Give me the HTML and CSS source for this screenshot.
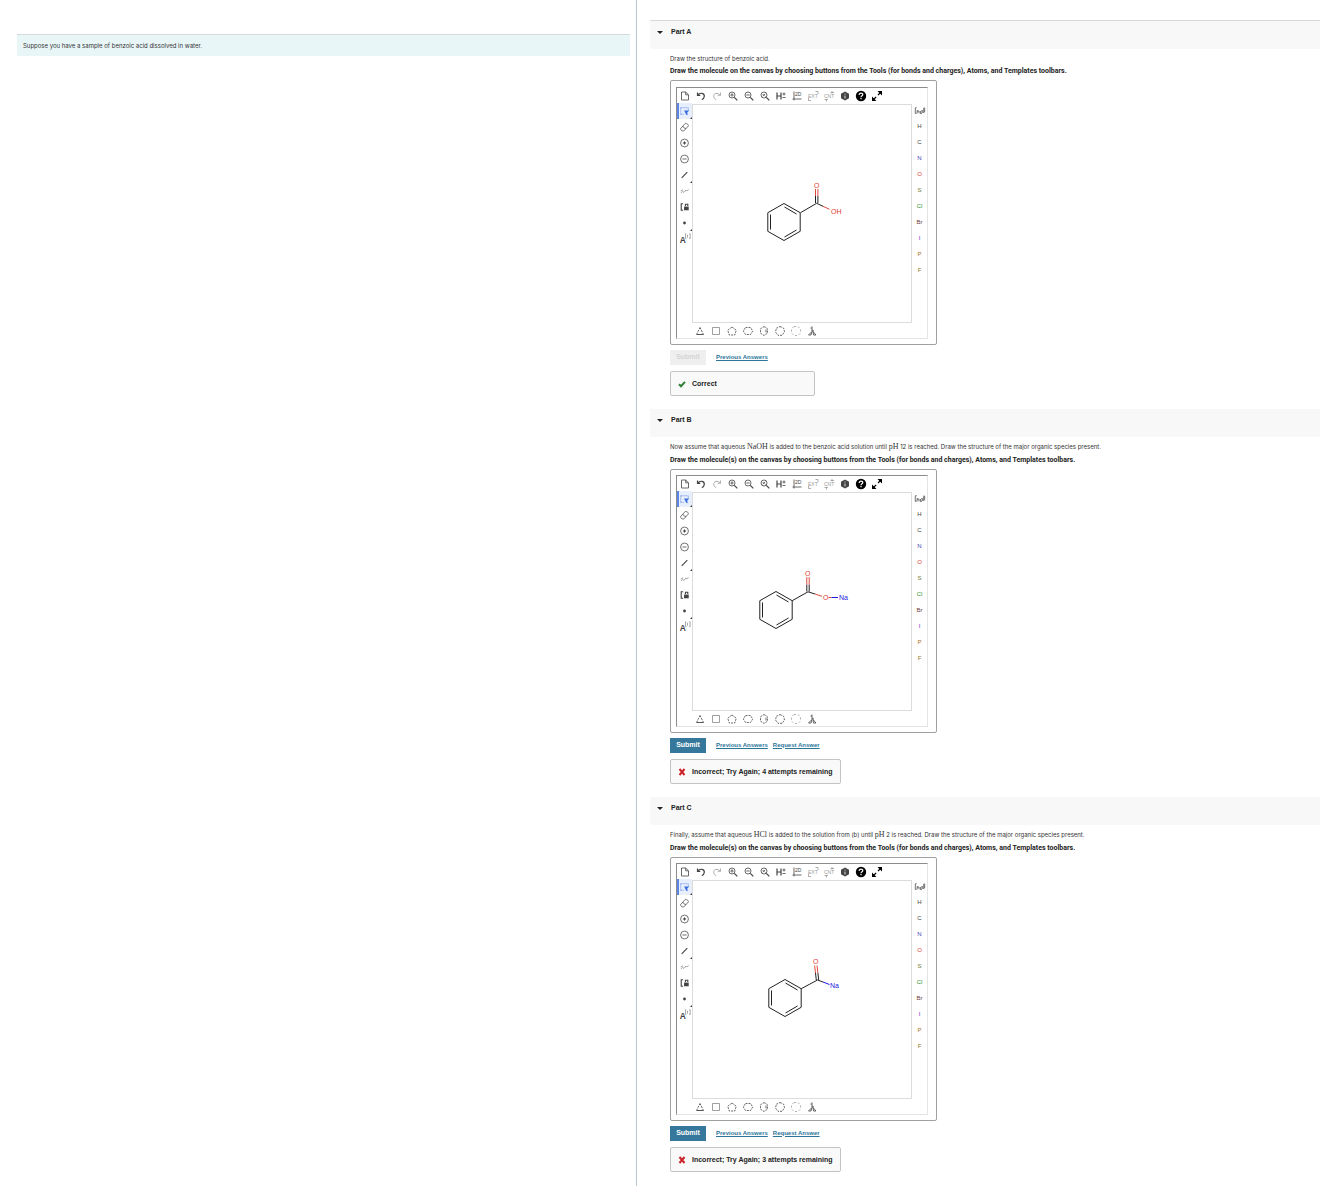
FILE: index.html
```html
<!DOCTYPE html>
<html lang="en">
<head>
    <meta charset="utf-8">
    <title>Benzoic acid</title>
    <link rel="stylesheet" href="styles.css">
</head>
<body>

<svg class="defs" aria-hidden="true">
    <!-- top toolbar -->
    <symbol id="i-new" viewBox="0 0 16 16"><path d="M4.500 4h4.200l2.800 2.800v5.200h-7zM8.700 4v2.800h2.800" /></symbol>
    <symbol id="i-undo" viewBox="0 0 16 16"><path class="thick" d="M4.500 4.500v2.800h2.800M4.700 7.200C7 4 12 5 11.200 8.800c-.3 1.500-1.200 2.400-2.400 2.800" /></symbol>
    <symbol id="i-redo" viewBox="0 0 16 16"><path d="M11.500 4.500v2.800h-2.800M11.300 7.200C9 4 4 5 4.800 8.800c.3 1.500 1.200 2.400 2.400 2.800" /></symbol>
    <symbol id="i-zoomin" viewBox="0 0 16 16"><circle cx="7" cy="7" r="3" /><path d="M5.300 7h3.400M7 5.300v3.400" /><path class="thick" d="M9.300 9.300l3 3" /></symbol>
    <symbol id="i-zoomout" viewBox="0 0 16 16"><circle cx="7" cy="7" r="3" /><path d="M5.300 7h3.400" /><path class="thick" d="M9.300 9.300l3 3" /></symbol>
    <symbol id="i-zoomfit" viewBox="0 0 16 16"><circle cx="7" cy="7" r="3" /><path d="M5.700 8.300l2.600-2.600M5.700 6l1 1M7.500 7.500l1 1" /><path class="thick" d="M9.300 9.300l3 3" /></symbol>
    <symbol id="i-hydro" viewBox="0 0 16 16"><path class="thick" d="M4 4.500v7M8 4.500v7M4 8h4" /><path d="M9.500 6h3M11 4.500v3M9.500 9.500h3" /></symbol>
    <symbol id="i-info" viewBox="0 0 16 16"><path class="solid" d="M8 3.500l4 2.300v4.400l-4 2.300-4-2.300V5.800z" /><path class="white" d="M8 7.500v3M8 5.500v1" /></symbol>
    <symbol id="i-help" viewBox="0 0 16 16"><circle class="solid" cx="8" cy="8" r="5.200" /><path class="white thick" d="M6.200 7C6 4.500 10 4.500 9.800 6.700 9.600 7.800 8 7.700 8 9.200M8 10v1.200" /></symbol>
    <symbol id="i-full" viewBox="0 0 16 16"><path class="solid" d="M8.500 3h4.500v4.500zM3 8.500v4.500h4.500z" /><path class="thick" d="M4.500 11.500l2.700-2.700M9 7l2.500-2.500" /></symbol>

    <!-- left toolbar -->
    <symbol id="i-select" viewBox="0 0 16 16"><path class="dots" d="M4 4.500h8M4 4.500v7M4 11.500h4M12 4.500v3" /><path class="solid" d="M7.500 7.500h5.500l-2 2 .3 3-1.500-.5z" /></symbol>
    <symbol id="i-erase" viewBox="0 0 16 16"><path d="M4 9.500l4.500-5c1-1 4.500 1 3.500 2.500l-4.500 5c-1.500 1-4.500-1-3.500-2.500zM6.200 7c.5 1.600 1.600 2.500 3.300 2.500" /></symbol>
    <symbol id="i-plus" viewBox="0 0 16 16"><circle cx="8" cy="8" r="4.200" /><path class="thick" d="M6.300 8h3.400M8 6.300v3.400" /></symbol>
    <symbol id="i-minus" viewBox="0 0 16 16"><circle cx="8" cy="8" r="4.200" /><path d="M5.800 8h4.400" /></symbol>
    <symbol id="i-bond" viewBox="0 0 16 16"><path class="thick" d="M5 11l6-6" /></symbol>
    <symbol id="i-chain" viewBox="0 0 16 16"><path class="grey" d="M4 10l2-1.500 1.500 1L9.500 7l1 .8L12.500 6.500M4 8l2.500-1.500" /></symbol>
    <symbol id="i-group" viewBox="0 0 16 16"><path class="thick" d="M6.500 4.500h-2v7h2M9 7V5h2.500v2" /><path class="solid" d="M7.500 7.500h5v4h-5z" /></symbol>
    <symbol id="i-radical" viewBox="0 0 16 16"><circle class="solid" cx="8" cy="8" r="1.500" /></symbol>
    <symbol id="i-rgroup" viewBox="0 0 16 16"><path d="M5 4.500H3.500v6H5M5.500 7v3.500M5.500 8h2v2.500M8.500 10.500h2l-2-1.500 2-1.500M11 7v2.500h1.500V4.500M13.500 4.500v5" /></symbol>

    <!-- ring templates -->
    <symbol id="i-ring3" viewBox="0 0 16 16"><path class="dash" d="M8 4.500l3.500 7h-7z" /><path d="M4.500 11.500h7" /></symbol>
    <symbol id="i-ring4" viewBox="0 0 16 16"><path class="grey" d="M4.500 4.500h7v7h-7z" /></symbol>
    <symbol id="i-ring5" viewBox="0 0 16 16"><path class="dash" d="M8 4l4.300 3.200L10.700 12H5.300L3.700 7.200z" /></symbol>
    <symbol id="i-ring6" viewBox="0 0 16 16"><path class="dash" d="M5.500 4.500h5L12.700 8l-2.200 3.500h-5L3.300 8z" /></symbol>
    <symbol id="i-benzene" viewBox="0 0 16 16"><path class="dash" d="M8 3.500l3.500 2.300v4.400L8 12.500l-3.500-2.300V5.800z" /><path d="M10 6.500v3" /></symbol>
    <symbol id="i-ring7" viewBox="0 0 16 16"><path class="dash" d="M8 3.500l3.700 1.800.8 3.700-2.500 3.300H6L3.500 9l.8-3.700z" /></symbol>
    <symbol id="i-ring8" viewBox="0 0 16 16"><path class="dash wide" d="M6 3.500h4L12.500 6v4L10 12.500H6L3.500 10V6z" /></symbol>
    <symbol id="i-more" viewBox="0 0 16 16"><path d="M8 3.500v5M6.500 5H8M8 7l2 1M8 8.500l-3.500 3.500h2.500zM9 8.500l3 3.500H9.500z" /></symbol>

    <!-- phenyl ring, centred on 0,0 -->
    <symbol id="phenyl" viewBox="-20 -20 40 40">
        <path d="M0-18.500L16.200-9.300V9.300L0 18.500-16.200 9.300V-9.300zM-13.500-7.500V7.500M.5-15L12.500-8M.5 15L12.500 8" />
    </symbol>
</svg>

<!-- one molecule editor, copied into every part -->
<template id="editor">
    <div class="sketcher">
        <div class="toolbar top">
            <button title="New"><svg><use href="#i-new" /></svg></button>
            <button title="Undo"><svg><use href="#i-undo" /></svg></button>
            <button title="Redo" class="off"><svg><use href="#i-redo" /></svg></button>
            <button title="Zoom in"><svg><use href="#i-zoomin" /></svg></button>
            <button title="Zoom out"><svg><use href="#i-zoomout" /></svg></button>
            <button title="Zoom to fit"><svg><use href="#i-zoomfit" /></svg></button>
            <button title="Hydrogens"><svg><use href="#i-hydro" /></svg></button>
            <button title="Clean 2D">
                <svg viewBox="0 0 16 16"><path d="M5 3.500v9M3.500 11h9" /><text x="6" y="8">2D</text></svg>
            </button>
            <button title="Expand" class="off">
                <svg viewBox="0 0 16 16"><path d="M10.500 3.500H13V6M3.500 10v2.500H6" /><text x="3" y="10">EXT</text></svg>
            </button>
            <button title="Contract" class="off">
                <svg viewBox="0 0 16 16"><path d="M11 3v2.500M9.500 4.500H13M5.500 11v2.500M3.500 11.500H7" /><text x="3" y="10">CNT</text></svg>
            </button>
            <button title="About"><svg><use href="#i-info" /></svg></button>
            <button title="Help" class="black"><svg><use href="#i-help" /></svg></button>
            <button title="Full screen" class="black"><svg><use href="#i-full" /></svg></button>
        </div>
        <div class="middle">
            <div class="toolbar side">
                <button title="Select" class="active more"><svg><use href="#i-select" /></svg></button>
                <button title="Erase"><svg><use href="#i-erase" /></svg></button>
                <button title="Increase charge"><svg><use href="#i-plus" /></svg></button>
                <button title="Decrease charge"><svg><use href="#i-minus" /></svg></button>
                <button title="Bond" class="more"><svg><use href="#i-bond" /></svg></button>
                <button title="Chain"><svg><use href="#i-chain" /></svg></button>
                <button title="Group"><svg><use href="#i-group" /></svg></button>
                <button title="Radical" class="more"><svg><use href="#i-radical" /></svg></button>
                <button title="Atom">
                    <svg viewBox="0 0 16 16"><text class="big" x="3" y="12">A</text><path class="grey" d="M10 2.500H9v5h1M11.200 3.500v3M13 2.500h1v5h-1" /></svg>
                </button>
            </div>
            <div class="canvas"></div>
            <div class="toolbar side atoms">
                <button title="R-group"><svg><use href="#i-rgroup" /></svg></button>
                <button>H</button>
                <button class="c">C</button>
                <button class="n">N</button>
                <button class="o">O</button>
                <button class="s">S</button>
                <button class="cl">Cl</button>
                <button class="br">Br</button>
                <button class="i">I</button>
                <button class="p">P</button>
                <button class="f">F</button>
            </div>
        </div>
        <div class="toolbar bottom">
            <button title="Cyclopropane"><svg><use href="#i-ring3" /></svg></button>
            <button title="Cyclobutane"><svg><use href="#i-ring4" /></svg></button>
            <button title="Cyclopentane"><svg><use href="#i-ring5" /></svg></button>
            <button title="Cyclohexane"><svg><use href="#i-ring6" /></svg></button>
            <button title="Benzene"><svg><use href="#i-benzene" /></svg></button>
            <button title="Cycloheptane"><svg><use href="#i-ring7" /></svg></button>
            <button title="Cyclooctane"><svg><use href="#i-ring8" /></svg></button>
            <button title="More templates"><svg><use href="#i-more" /></svg></button>
        </div>
    </div>
</template>

<div class="page">
    <aside class="intro">
        <p>Suppose you have a sample of benzoic acid dissolved in water.</p>
    </aside>

    <main class="parts">
        <section class="part">
            <h2><button aria-expanded="true">Part A</button></h2>
            <div class="body">
                <p>Draw the structure of benzoic acid.</p>
                <p class="instr">Draw the molecule on the canvas by choosing buttons from the Tools (for bonds and charges), Atoms, and Templates toolbars.</p>
                <div class="editor">
                    <svg class="molecule" viewBox="0 0 218 217">
                        <use href="#phenyl" x="71" y="97" width="40" height="40" />
                        <path d="M107.500 107.700L123.700 98.300L130 101.300M122.500 98V91M124.900 98V91" />
                        <path class="red" d="M130 101.300L136.500 104.300M122.500 91V84M124.900 91V84" />
                        <text class="red" x="121" y="83">O</text>
                        <text class="red" x="138" y="109">OH</text>
                    </svg>
                </div>
                <div class="actions">
                    <button class="submit" disabled>Submit</button>
                    <a href="#">Previous Answers</a>
                </div>
                <div class="feedback">
                    <svg class="ok" viewBox="0 0 8 8"><path d="M1 4.200l2 2L7 1.800" /></svg>
                    Correct
                </div>
            </div>
        </section>

        <section class="part">
            <h2><button aria-expanded="true">Part B</button></h2>
            <div class="body">
                <p>Now assume that aqueous <span class="math">NaOH</span> is added to the benzoic acid solution until <span class="math">pH</span> 12 is reached. Draw the structure of the major organic species present.</p>
                <p class="instr">Draw the molecule(s) on the canvas by choosing buttons from the Tools (for bonds and charges), Atoms, and Templates toolbars.</p>
                <div class="editor">
                    <svg class="molecule" viewBox="0 0 218 217">
                        <use href="#phenyl" x="63" y="97" width="40" height="40" />
                        <path d="M99.200 107.700L115 98.800L122 101M113.800 98.500V91.500M116.200 98.500V91.500" />
                        <path class="red" d="M122 101L129 103.300M113.800 91.500V84M116.200 91.500V84M135.500 104.500h3" />
                        <path class="blue" d="M138.500 104.500h6.500" />
                        <text class="red" x="112" y="83">O</text>
                        <text class="red" x="130" y="107">O</text>
                        <text class="blue" x="146" y="107">Na</text>
                    </svg>
                </div>
                <div class="actions">
                    <button class="submit">Submit</button>
                    <a href="#">Previous Answers</a>
                    <a href="#">Request Answer</a>
                </div>
                <div class="feedback">
                    <svg class="bad" viewBox="0 0 8 8"><path d="M1.500 1l5 6M6.500 1l-5 6" /></svg>
                    Incorrect; Try Again; 4 attempts remaining
                </div>
            </div>
        </section>

        <section class="part">
            <h2><button aria-expanded="true">Part C</button></h2>
            <div class="body">
                <p>Finally, assume that aqueous <span class="math">HCl</span> is added to the solution from (b) until <span class="math">pH</span> 2 is reached. Draw the structure of the major organic species present.</p>
                <p class="instr">Draw the molecule(s) on the canvas by choosing buttons from the Tools (for bonds and charges), Atoms, and Templates toolbars.</p>
                <div class="editor">
                    <svg class="molecule" viewBox="0 0 218 217">
                        <use href="#phenyl" x="72" y="97" width="40" height="40" />
                        <path d="M108.200 107.700L124.500 99L130 101M123.300 99L122.500 92M125.700 99L124.900 92" />
                        <path class="red" d="M122.500 92L121.600 84.500M124.900 92L124 84.500" />
                        <path class="blue" d="M130 101L136.500 103.500" />
                        <text class="red" x="120" y="83">O</text>
                        <text class="blue" x="137" y="107">Na</text>
                    </svg>
                </div>
                <div class="actions">
                    <button class="submit">Submit</button>
                    <a href="#">Previous Answers</a>
                    <a href="#">Request Answer</a>
                </div>
                <div class="feedback">
                    <svg class="bad" viewBox="0 0 8 8"><path d="M1.500 1l5 6M6.500 1l-5 6" /></svg>
                    Incorrect; Try Again; 3 attempts remaining
                </div>
            </div>
        </section>
    </main>
</div>

<script>
    var tpl = document.getElementById("editor");

    document.querySelectorAll(".editor").forEach(function(box) {
        var molecule = box.querySelector(".molecule");
        box.appendChild(tpl.content.cloneNode(true));
        box.querySelector(".canvas").appendChild(molecule);
    });
</script>
</body>
</html>
```

FILE: styles.css
```css
* {
    box-sizing: border-box;
}

body {
    margin: 0;
    background: #fff;
    color: #333;
    font-family: "Liberation Sans", Arial, sans-serif;
    font-size: 6px;
    line-height: 12px;
}

p, h2 {
    margin: 0;
}

p {
    font-family: Inter, "Liberation Sans", sans-serif;
}

button {
    padding: 0;
    border: 0;
    background: none;
    color: inherit;
    font: inherit;
}

.defs {
    position: absolute;
    width: 0;
    height: 0;
}

.page {
    display: grid;
    grid-template-columns: 637fr 683fr;
    min-height: 100vh;
}

/* left column */
.intro {
    padding: 34px 6px 0 17px;
    border-right: 1px solid #b4c8d3;
}

.intro p {
    padding: 5px 6px 4px;
    border-top: 1px solid #d5dbdb;
    background: #e9f6f8;
}

/* right column */
.parts {
    padding: 20px 0 0 13px;
}

.part {
    padding-bottom: 13px;
}

.part:last-child {
    padding-bottom: 0;
}

.part h2 {
    height: 28px;
    padding: 5px 7px;
    background: #f8f8f8;
    font-size: 7px;
    line-height: 12px;
}

.part:first-child h2 {
    height: 29px;
    border-top: 1px solid #d8d8d8;
}

.part h2 button {
    display: flex;
    align-items: center;
    gap: 8px;
    color: #222;
}

.part h2 button::before {
    content: "";
    border: 3px solid transparent;
    border-top-color: #222;
    border-bottom: 0;
}

.body {
    padding: 4px 20px 0;
}

.instr {
    color: #222;
    font-family: Roboto, "Liberation Sans", sans-serif;
    font-size: 7px;
    font-weight: bold;
}

/* lines with formulas are a bit taller */
.part + .part .instr {
    margin-top: 1px;
}

.math {
    font-family: "Liberation Serif", "Times New Roman", serif;
    font-size: 8px;
    line-height: 8px;
}

/* editor */
.editor {
    width: 267px;
    margin-top: 3px;
    padding: 6px 8px 5px 5px;
    border: 1px solid #a0a0a0;
    border-radius: 2px;
}

.part + .part .editor {
    padding-top: 5px;
}

.sketcher {
    width: 252px;
    border: 1px solid #e4e4e4;
    border-top-color: #8c8c8c;
    border-left-color: #8c8c8c;
    color: #444;
}

.toolbar {
    display: flex;
}

.toolbar button {
    display: block;
    width: 16px;
    height: 15px;
}

.toolbar svg {
    display: block;
    width: 16px;
    height: 16px;
    fill: none;
    stroke: currentColor;
    stroke-width: 0.8;
}

.toolbar text {
    fill: currentColor;
    stroke: none;
    font-size: 5px;
}

.toolbar .big {
    font-size: 9px;
    font-weight: bold;
}

.toolbar .off {
    color: #999;
}

.toolbar .black {
    color: #000;
}

.middle {
    display: grid;
    grid-template-columns: 15px 1fr 15px;
}

.side {
    flex-direction: column;
}

.side button {
    width: 15px;
    height: 16px;
}

.side svg {
    width: 15px;
}

.side .active {
    background: #e8effc;
    box-shadow: inset 2px 0 #5b86e5;
    color: #3b6fe0;
}

.side .more {
    position: relative;
}

.side .more::after {
    content: "";
    position: absolute;
    right: 0;
    bottom: 0;
    border: 1px solid #333;
    border-top-color: transparent;
    border-left-color: transparent;
}

.bottom {
    padding-left: 15px;
}

.canvas {
    height: 219px;
    margin-top: 1px;
    border: 1px solid #dcdcdc;
}

.atoms {
    font-size: 6px;
}

.atoms button {
    padding-bottom: 2px;
}

.atoms .n { color: #3b3bb5; }
.atoms .o { color: #e0463c; }
.atoms .s { color: #77772e; }
.atoms .cl { color: #2a931e; }
.atoms .br { color: #6b3c3c; }
.atoms .i { color: #7a3cc8; }
.atoms .p { color: #a8701c; }
.atoms .f { color: #8c7a28; }

/* icon parts */
.thick { stroke-width: 1.2; }
.grey { stroke: #888; }
.solid { fill: currentColor; stroke: none; }
.white { stroke: #fff; }
.dots { stroke-dasharray: 1 1; }
.dash { stroke-dasharray: 2 1; }
.wide { stroke: #999; stroke-dasharray: 2 2; }

.molecule {
    display: block;
    width: 100%;
    height: 100%;
    fill: none;
    stroke: #222;
    stroke-width: 1;
}

.molecule .red { stroke: #dc4a40; }
.molecule .blue { stroke: #1a1ae0; }

.canvas .molecule text {
    stroke: none;
    font-size: 7px;
}

.molecule text.red { fill: #dc3a30; }
.molecule text.blue { fill: #1a1ae0; }

/* below the editor */
.actions {
    display: flex;
    align-items: center;
    gap: 5px;
    height: 15px;
    margin-top: 5px;
}

.actions a {
    padding-bottom: 2px;
    color: #2b7599;
    font-weight: bold;
}

.submit {
    width: 36px;
    height: 15px;
    margin-right: 5px;
    padding-bottom: 1px;
    background: #35789b;
    color: #fff;
    font-size: 7px;
    font-weight: bold;
}

.submit:disabled {
    background: #efefef;
    color: #d6d6d6;
}

.feedback {
    display: flex;
    align-items: center;
    gap: 6px;
    width: fit-content;
    min-width: 145px;
    height: 25px;
    margin-top: 6px;
    padding: 0 7px;
    border: 1px solid #c4c4c4;
    border-radius: 2px;
    background: #f9f9f9;
    color: #222;
    font-size: 7px;
    font-weight: bold;
}

.feedback svg {
    width: 8px;
    height: 8px;
    fill: none;
    stroke-width: 2;
}

.ok { stroke: #2e8038; }
.bad { stroke: #cc2229; }
```
